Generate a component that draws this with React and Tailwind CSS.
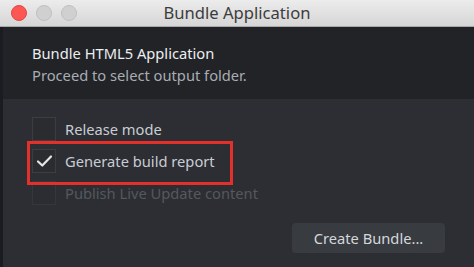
import React from "react";

const font = { fontFamily: '"Noto Sans", "Open Sans", sans-serif' };

function Light({ cls }) {
  return <span className={`w-[16px] h-[16px] rounded-full ${cls}`} />;
}

function Check({ checked, dim, label }) {
  return (
    <div className="flex items-center h-[32px]">
      <span className={`w-[24px] h-[24px] border grid place-items-center ${dim ? "border-[#34373c] bg-[#2b2d32]" : "border-[#3a3d42] bg-[#2a2c30]"}`}>
        {checked && (
          <svg width="17" height="14" viewBox="0 0 17 14" fill="none">
            <path d="M2 7.5 L6.3 11.5 L15 2.5" stroke="#e6e6e6" strokeWidth="2.2" strokeLinecap="round" strokeLinejoin="round" />
          </svg>
        )}
      </span>
      <span className={`ml-[9px] text-[14.7px] ${dim ? "text-[#55585e]" : "text-[#c9cdd3]"}`}>{label}</span>
    </div>
  );
}

export default function App() {
  return (
    <div className="w-[474px] h-[267px] flex flex-col overflow-hidden bg-[#2c2e33]" style={font}>
      {/* title bar */}
      <div className="h-[27px] relative flex items-center bg-gradient-to-b from-[#ececec] to-[#d6d6d6] border-b border-[#a9a9a9]">
        <div className="flex items-center gap-[9px] pl-[11px]">
          <Light cls="bg-[#fc5753] border border-[#df4744]" />
          <Light cls="bg-[#d0d0d0] border border-[#c0c0c0]" />
          <Light cls="bg-[#d0d0d0] border border-[#c0c0c0]" />
        </div>
        <div className="absolute inset-0 flex items-center justify-center text-[16.6px] text-[#3c3c3c]">Bundle Application</div>
      </div>

      <div className="flex-1 flex border-l-[3px] border-[#1b1c22]">
        <div className="flex-1 flex flex-col">
          {/* header */}
          <div className="h-[72px] bg-[#212327] pl-[29px] pt-[15px] flex flex-col">
            <div className="text-[14.7px] leading-[22px] text-[#eceef0]">Bundle HTML5 Application</div>
            <div className="text-[14.7px] leading-[22px] text-[#a9adb3]">Proceed to select output folder.</div>
          </div>

          {/* options */}
          <div className="pl-[29px] pt-[14px] flex flex-col">
            <Check label="Release mode" />
            <div className="relative">
              <Check checked label="Generate build report" />
              <div className="absolute left-[-5px] top-[-4px] w-[206px] h-[44px] border-[3px] border-[#e3302b]" />
            </div>
            <Check dim label="Publish Live Update content" />
          </div>

          <div className="flex justify-end pr-[29px] mt-[14px]">
            <button className="w-[153px] h-[30px] rounded-[4px] bg-[#383b40] text-[14.7px] text-[#d4d7db]">Create Bundle...</button>
          </div>
        </div>
      </div>
    </div>
  );
}
